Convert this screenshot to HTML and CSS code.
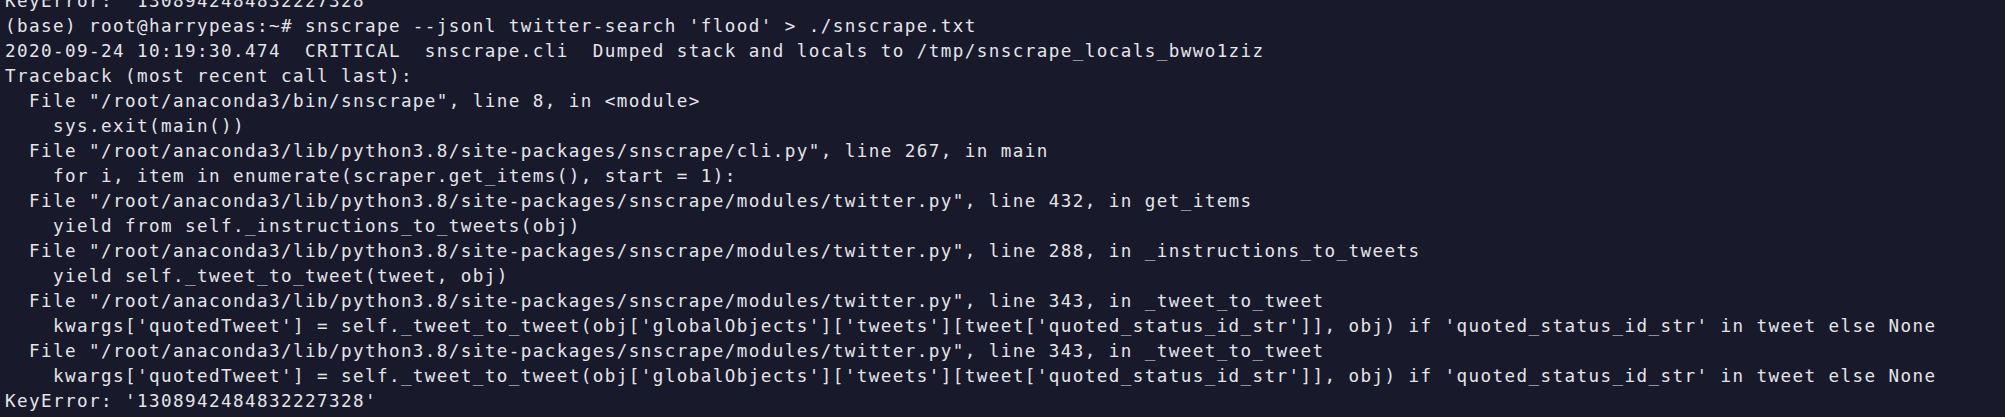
FILE: index.html
```html
<!DOCTYPE html>
<html>
<head>
<meta charset="utf-8">
<link rel="stylesheet" href="styles.css">
</head>
<body>
<pre class="term">KeyError: '1308942484832227328'
(base) root@harrypeas:~# snscrape --jsonl twitter-search 'flood' &gt; ./snscrape.txt
2020-09-24 10:19:30.474  CRITICAL  snscrape.cli  Dumped stack and locals to /tmp/snscrape_locals_bwwo1ziz
Traceback (most recent call last):
  File "/root/anaconda3/bin/snscrape", line 8, in &lt;module&gt;
    sys.exit(main())
  File "/root/anaconda3/lib/python3.8/site-packages/snscrape/cli.py", line 267, in main
    for i, item in enumerate(scraper.get_items(), start = 1):
  File "/root/anaconda3/lib/python3.8/site-packages/snscrape/modules/twitter.py", line 432, in get_items
    yield from self._instructions_to_tweets(obj)
  File "/root/anaconda3/lib/python3.8/site-packages/snscrape/modules/twitter.py", line 288, in _instructions_to_tweets
    yield self._tweet_to_tweet(tweet, obj)
  File "/root/anaconda3/lib/python3.8/site-packages/snscrape/modules/twitter.py", line 343, in _tweet_to_tweet
    kwargs['quotedTweet'] = self._tweet_to_tweet(obj['globalObjects']['tweets'][tweet['quoted_status_id_str']], obj) if 'quoted_status_id_str' in tweet else None
  File "/root/anaconda3/lib/python3.8/site-packages/snscrape/modules/twitter.py", line 343, in _tweet_to_tweet
    kwargs['quotedTweet'] = self._tweet_to_tweet(obj['globalObjects']['tweets'][tweet['quoted_status_id_str']], obj) if 'quoted_status_id_str' in tweet else None
KeyError: '1308942484832227328'</pre>
</body>
</html>
```
FILE: styles.css
```css
html, body {
  margin: 0;
  padding: 0;
  background: #181a2b;
  overflow: hidden;
  height: 100%;
}
.term {
  margin: -11px 0 0 0;
  padding: 0 0 0 5px;
  font-family: "DejaVu Sans Mono", "Liberation Mono", monospace;
  font-size: 17.6px;
  letter-spacing: 1.404px;
  line-height: 25px;
  color: #e4e4ea;
  white-space: pre;
}
```
